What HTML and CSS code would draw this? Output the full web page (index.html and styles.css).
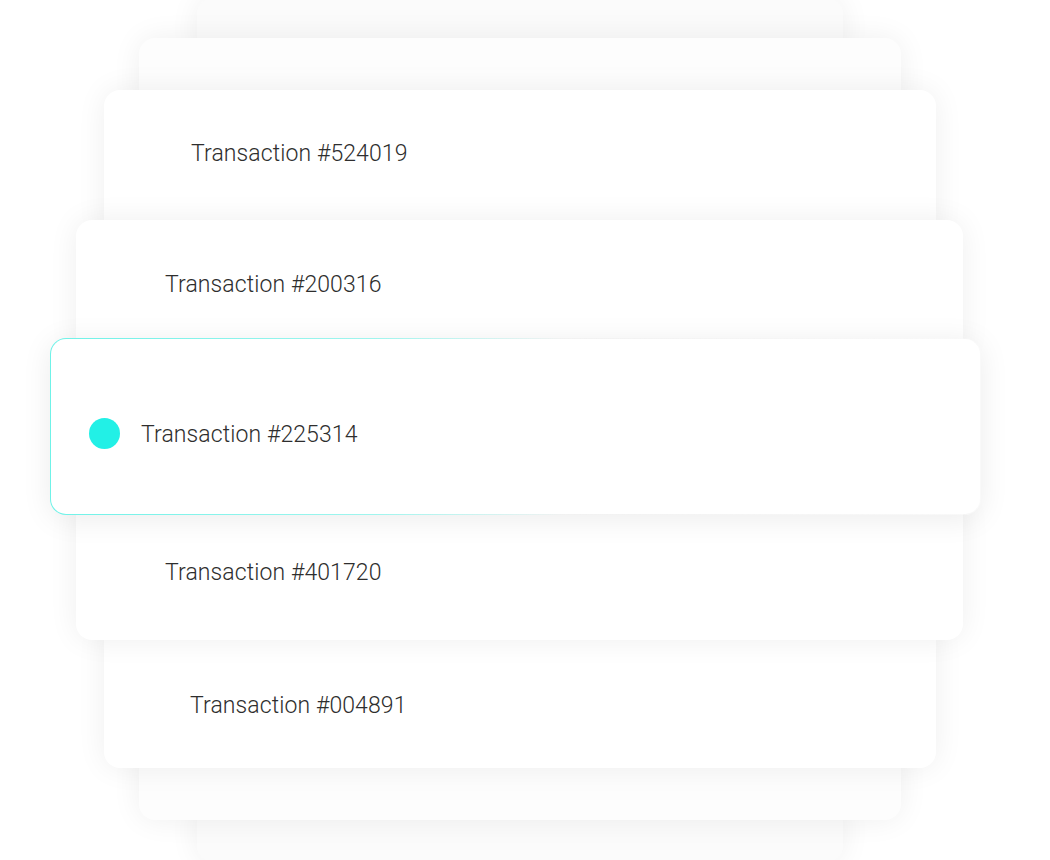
FILE: index.html
```html
<!DOCTYPE html>
<html lang="en">
<head>
  <meta charset="UTF-8" />
  <meta name="viewport" content="width=device-width, initial-scale=1.0"/>
  <title>Transactions</title>
  <link rel="stylesheet" href="styles.css">
</head>

<body>
  <div class="stack">
    <div class="card card-back-2 top"></div>
    <div class="card card-back-1 top"></div>
    <div class="card card-outer top-3">
      <span class="label">Transaction #524019</span>
    </div>
    <div class="card card-inner top-4">
      <span class="label">Transaction #200316</span>
    </div>

    <div class="card card-active">
      <span class="dot"></span>
      <span class="label">Transaction #225314</span>
    </div>

    <div class="card card-inner bottom-6">
      <span class="label">Transaction #401720</span>
    </div>
    <div class="card card-outer bottom-7">
      <span class="label">Transaction #004891</span>
    </div>
    <div class="card card-back-1 bottom-8"></div>
    <div class="card card-back-2 bottom-9"></div>
  </div>
</body>
</html>
```

FILE: styles.css
```css
* {
  box-sizing: border-box;
}

body {
  margin: 0;
  background-color: #fff;
  font-family: Roboto, "Liberation Sans", Arial, sans-serif;
  overflow: hidden;
  height: 860px;
}

.stack {
  display: flex;
  flex-direction: column;
  align-items: flex-start;
  margin-top: -2px;
}

.card {
  position: relative;
  display: flex;
  align-items: flex-start;
  background-color: #fff;
  border-radius: 16px;
  box-shadow: 0 0 30px rgba(0, 0, 0, 0.065);
  margin-top: -20px;
}

.card:first-child {
  margin-top: 0;
}

.label {
  font-size: 23px;
  font-weight: 300;
  line-height: 30px;
  letter-spacing: 0.1px;
  color: #2e2e2e;
}

/* back layers */
.card-back-2 {
  width: 646px;
  margin-left: 197px;
  background-color: #fbfbfb;
}

.card-back-1 {
  width: 762px;
  margin-left: 139px;
  background-color: #fdfdfd;
}

.card-outer {
  width: 832px;
  margin-left: 104px;
}

.card-inner {
  width: 887px;
  margin-left: 76px;
}

/* top half: each card sits on the one above */
.card-back-2.top {
  height: 60px;
  z-index: 1;
}

.card-back-1.top {
  height: 72px;
  z-index: 2;
}

.top-3 {
  height: 150px;
  padding: 49px 0 0 87px;
  z-index: 3;
}

.top-4 {
  height: 138px;
  padding: 50px 0 0 89px;
  z-index: 4;
}

/* selected card */
.card-active {
  width: 931px;
  height: 177px;
  margin-left: 50px;
  padding: 81px 0 0 38px;
  gap: 21px;
  z-index: 10;
  border: 1px solid transparent;
  background:
    linear-gradient(#fff, #fff) padding-box,
    linear-gradient(90deg, #6ff2e8 0%, #a0f5ee 35%, rgba(236, 236, 236, 0.7) 55%, rgba(240, 240, 240, 0.4) 100%) border-box;
  box-shadow: 0 4px 30px rgba(0, 0, 0, 0.08);
}

.dot {
  width: 31px;
  height: 31px;
  margin-top: -2px;
  border-radius: 50%;
  background-color: #22f0e6;
  flex-shrink: 0;
}

/* bottom half: each card sits under the one above */
.bottom-6 {
  height: 145px;
  padding: 63px 0 0 89px;
  z-index: 4;
}

.bottom-7 {
  height: 148px;
  padding: 71px 0 0 86px;
  z-index: 3;
}

.card-back-1.bottom-8 {
  height: 72px;
  z-index: 2;
}

.card-back-2.bottom-9 {
  height: 62px;
  z-index: 1;
}
```
